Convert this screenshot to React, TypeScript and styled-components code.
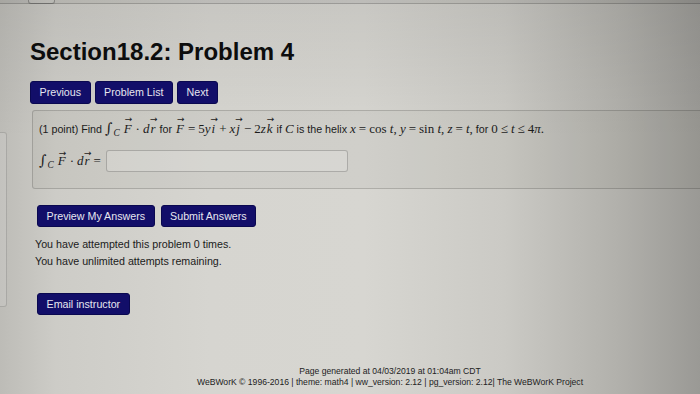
import styled, { createGlobalStyle } from "styled-components";

const Navy = "#120e69";
const ButtonText = "#e6e6ef";
const InkText = "#1b1b1b";

const GlobalStyle = createGlobalStyle`
  html, body {
    margin: 0;
    padding: 0;
  }
  body {
    width: 700px;
    height: 394px;
    overflow: hidden;
    font-family: "Liberation Sans", Arial, sans-serif;
    color: ${InkText};
    background:
      linear-gradient(180deg, rgba(0, 0, 0, 0.07) 0%, rgba(0, 0, 0, 0) 35%),
      linear-gradient(
        90deg,
        #bdbcb7 0%,
        #cdccc7 8%,
        #d6d5d0 30%,
        #d7d6d1 52%,
        #cbcac5 72%,
        #b2b1ac 88%,
        #9a9995 100%
      );
  }
`;

const Page = styled.div`
  display: flex;
  flex-direction: column;
  height: 394px;
`;

const TopBar = styled.div`
  height: 3px;
  background: rgba(0, 0, 0, 0.05);
  border-bottom: 1px solid rgba(0, 0, 0, 0.18);
  display: flex;
`;

const TopTab = styled.div`
  margin-left: 28px;
  width: 25px;
  height: 3px;
  border: 1px solid rgba(0, 0, 0, 0.28);
  border-top: none;
  border-radius: 0 0 3px 3px;
  background: rgba(255, 255, 255, 0.08);
`;

const Body = styled.div`
  display: flex;
  flex: 1;
`;

const Sidebar = styled.div`
  width: 6px;
  height: 173px;
  margin-top: 128px;
  background: rgba(255, 255, 255, 0.1);
  border: 1px solid rgba(0, 0, 0, 0.14);
  border-left: none;
  border-radius: 0 3px 3px 0;
`;

const Main = styled.main`
  flex: 1;
  padding-left: 23px;
  display: flex;
  flex-direction: column;
  align-items: flex-start;
  min-width: 0;
`;

const Heading = styled.h1`
  margin: 34px 0 0 0;
  font-size: 24px;
  line-height: 28px;
  font-weight: 700;
  color: #0d0d0d;
`;

const ButtonRow = styled.div<{ $top: number; $left?: number }>`
  display: flex;
  gap: ${(p) => (p.$left ? 6 : 4)}px;
  margin-top: ${(p) => p.$top}px;
  margin-left: ${(p) => p.$left ?? 0}px;
`;

const Button = styled.button<{ $h?: number }>`
  height: ${(p) => p.$h ?? 22}px;
  padding: 0 8.5px;
  background: ${Navy};
  color: ${ButtonText};
  border: 1px solid #0a0850;
  border-radius: 3px;
  font-family: "Liberation Sans", Arial, sans-serif;
  font-size: 10.7px;
  line-height: 1;
  cursor: pointer;
`;

const ProblemBox = styled.section`
  align-self: stretch;
  margin: 6px 0 0 2px;
  padding: 9px 0 16px 6px;
  background: rgba(60, 60, 40, 0.045);
  border: 1px solid rgba(0, 0, 0, 0.16);
  border-right: none;
  border-radius: 3px 0 0 3px;
`;

const ProblemLine = styled.p`
  margin: 0;
  height: 17px;
  line-height: 17px;
  font-size: 10.7px;
  white-space: nowrap;
`;

const AnswerRow = styled.div`
  display: flex;
  align-items: center;
  gap: 2px;
  margin-top: 13px;
`;

const M = styled.span`
  font-family: "Liberation Serif", "Times New Roman", serif;
  font-size: 13px;
  white-space: nowrap;
`;

const I = styled.i`
  font-family: "Liberation Serif", "Times New Roman", serif;
  font-style: italic;
`;

const IntSign = styled.span`
  font-family: "DejaVu Serif", "Liberation Serif", serif;
  font-style: italic;
  font-size: 1.1em;
  margin-right: 1px;
`;

const Sub = styled.sub`
  font-family: "Liberation Serif", "Times New Roman", serif;
  font-style: italic;
  font-size: 0.72em;
  vertical-align: -0.3em;
  margin-right: 3px;
`;

const Vec = styled.i`
  position: relative;
  display: inline-block;
  font-family: "Liberation Serif", "Times New Roman", serif;
  font-style: italic;
  padding: 0 1px;
  &::before {
    content: "\\2192";
    position: absolute;
    left: 50%;
    top: -0.5em;
    transform: translateX(-38%);
    font-family: "DejaVu Sans", sans-serif;
    font-style: normal;
    font-size: 0.7em;
    line-height: 1;
  }
`;

const Op = styled.span`
  margin: 0 3px;
`;

const AnswerInput = styled.input`
  width: 242px;
  height: 22px;
  box-sizing: border-box;
  background: rgba(255, 255, 255, 0.16);
  border: 1px solid rgba(0, 0, 0, 0.2);
  border-radius: 3px;
  outline: none;
`;

const Attempts = styled.div`
  margin: 9px 0 0 5px;
  font-size: 10.7px;
  line-height: 17px;
`;

const Footer = styled.footer`
  align-self: stretch;
  margin-top: 51px;
  padding-left: 50px;
  text-align: center;
  font-size: 8.6px;
  line-height: 11px;
  color: #222;
`;

export default function App() {
  return (
    <Page>
      <GlobalStyle />
      <TopBar>
        <TopTab />
      </TopBar>
      <Body>
        <Sidebar />
        <Main>
          <Heading>Section18.2: Problem 4</Heading>

          <ButtonRow $top={15}>
            <Button $h={23}>Previous</Button>
            <Button $h={23}>Problem List</Button>
            <Button $h={23}>Next</Button>
          </ButtonRow>

          <ProblemBox>
            <ProblemLine>
              (1 point) Find{" "}
              <M>
                <IntSign>∫</IntSign>
                <Sub>C</Sub>
                <Vec>F</Vec>
                <Op>·</Op>
                <I>d</I>
                <Vec>r</Vec>
              </M>{" "}
              for{" "}
              <M>
                <Vec>F</Vec>
                <Op>=</Op>5<I>y</I>
                <Vec>i</Vec>
                <Op>+</Op>
                <I>x</I>
                <Vec>j</Vec>
                <Op>−</Op>2<I>z</I>
                <Vec>k</Vec>
              </M>{" "}
              if <M><I>C</I></M> is the helix{" "}
              <M>
                <I>x</I>
                <Op>=</Op>cos <I>t</I>, <I>y</I>
                <Op>=</Op>sin <I>t</I>, <I>z</I>
                <Op>=</Op>
                <I>t</I>,
              </M>{" "}
              for{" "}
              <M>
                0<Op>≤</Op>
                <I>t</I>
                <Op>≤</Op>4<I>π</I>.
              </M>
            </ProblemLine>
            <AnswerRow>
              <M>
                <IntSign>∫</IntSign>
                <Sub>C</Sub>
                <Vec>F</Vec>
                <Op>·</Op>
                <I>d</I>
                <Vec>r</Vec>
                <Op>=</Op>
              </M>
              <AnswerInput type="text" aria-label="answer" />
            </AnswerRow>
          </ProblemBox>

          <ButtonRow $top={16} $left={7}>
            <Button>Preview My Answers</Button>
            <Button>Submit Answers</Button>
          </ButtonRow>

          <Attempts>
            You have attempted this problem 0 times.
            <br />
            You have unlimited attempts remaining.
          </Attempts>

          <ButtonRow $top={23} $left={7}>
            <Button>Email instructor</Button>
          </ButtonRow>

          <Footer>
            Page generated at 04/03/2019 at 01:04am CDT
            <br />
            WeBWorK © 1996-2016 | theme: math4 | ww_version: 2.12 | pg_version:
            2.12| The WeBWorK Project
          </Footer>
        </Main>
      </Body>
    </Page>
  );
}
